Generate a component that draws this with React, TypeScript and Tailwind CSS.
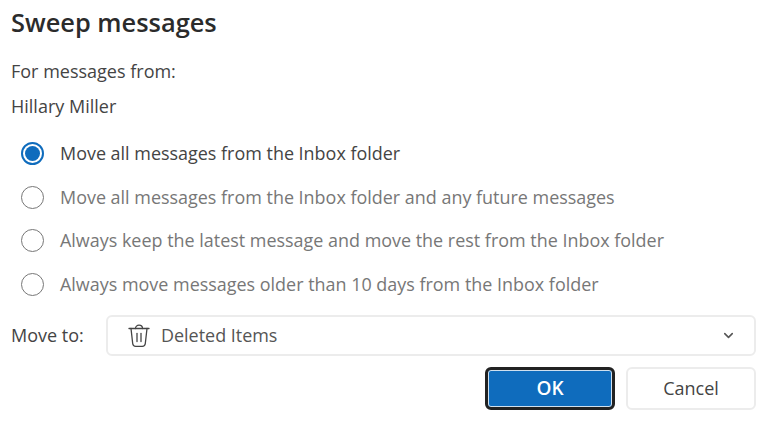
import React from 'react';
import { ChevronDown } from 'lucide-react';

const options = [
  'Move all messages from the Inbox folder',
  'Move all messages from the Inbox folder and any future messages',
  'Always keep the latest message and move the rest from the Inbox folder',
  'Always move messages older than 10 days from the Inbox folder',
];

const TrashIcon = () => (
  <svg width="22" height="24" viewBox="0 0 22 24" fill="none" stroke="#444" strokeWidth="1.3" strokeLinecap="round" strokeLinejoin="round">
    <path d="M1 4.500h20" />
    <path d="M7.500 4.500C7.500 2.600 9 1.200 11 1.200s3.500 1.400 3.500 3.300" />
    <path d="M3 4.500 4.700 19.500c.2 1.800 1.400 2.900 3 2.900h6.600c1.600 0 2.800-1.100 3-2.900L19 4.500" />
    <path d="M9 9.500v8" />
    <path d="M13 9.500v8" />
  </svg>
);

export default function App() {
  return (
    <div className="w-[768px] h-[422px] bg-white overflow-hidden pl-[11px] pr-[12px] pt-[5px] font-['Open_Sans','Noto_Sans',sans-serif] text-[#444]">
      <h1 className="text-[25.400px] leading-[34px] font-semibold text-[#2b2b2b]">Sweep messages</h1>

      <p className="mt-[21px] text-[18px] leading-[22px]">For messages from:</p>
      <p className="mt-[13px] text-[18px] leading-[22px]">Hillary Miller</p>

      <div className="mt-[15px] pl-[10px] flex flex-col">
        {options.map((label, i) => (
          <div key={label} className="h-[43.500px] flex items-center gap-[16px]">
            {i === 0 ? (
              <span className="w-[23px] h-[23px] rounded-full border-2 border-[#0f6cbd] flex items-center justify-center">
                <span className="w-[15px] h-[15px] rounded-full bg-[#0f6cbd]" />
              </span>
            ) : (
              <span className="w-[23px] h-[23px] rounded-full border-[1.500px] border-[#777]" />
            )}
            <span className={`text-[17.950px] ${i === 0 ? 'text-[#444]' : 'text-[#777]'}`}>{label}</span>
          </div>
        ))}
      </div>

      <div className="mt-[9px] flex items-center">
        <span className="w-[95px] text-[18px]">Move to:</span>
        <div className="flex-1 h-[41px] border-2 border-[#ececec] rounded-[6px] flex items-center pl-[20px] pr-[18px]">
          <TrashIcon />
          <span className="ml-[11px] text-[17.950px] text-[#555]">Deleted Items</span>
          <ChevronDown className="ml-auto text-[#555]" size={15} strokeWidth={2.500} />
        </div>
      </div>

      <div className="mt-[11px] flex justify-end gap-[11px]">
        <button className="w-[130px] h-[43px] rounded-[6px] bg-[#0f6cbd] border-[3px] border-[#222] text-white font-semibold text-[19px] shadow-[inset_0_0_0_1px_#cfe0ef]">OK</button>
        <button className="w-[130px] h-[43px] rounded-[6px] bg-white border-2 border-[#ececec] text-[#444] font-medium text-[18px]">Cancel</button>
      </div>
    </div>
  );
}
